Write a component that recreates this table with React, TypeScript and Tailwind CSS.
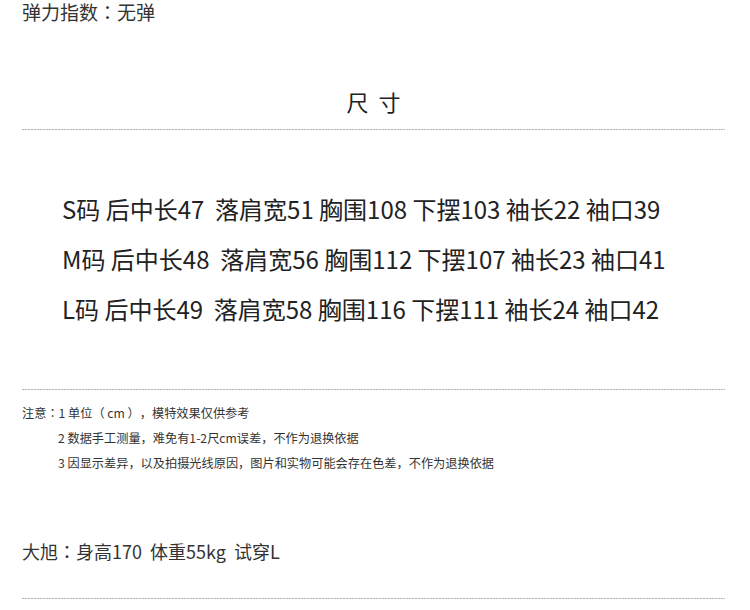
import React from "react";

const font = { fontFamily: '"Noto Sans CJK SC", "Noto Sans", sans-serif' };

function Dots() {
  return (
    <div className="h-px w-full bg-[repeating-linear-gradient(to_right,#b4b4b4_0px,#b4b4b4_2px,#e6e6e6_2px,#e6e6e6_3px)]" />
  );
}

function Colon() {
  return <span style={{ fontFamily: '"Noto Sans CJK TC", sans-serif' }}>：</span>;
}

const rows = [
  "S码 后中长47\u00a0\u00a0落肩宽51 胸围108 下摆103 袖长22 袖口39",
  "M码 后中长48\u00a0\u00a0落肩宽56 胸围112 下摆107 袖长23 袖口41",
  "L码 后中长49\u00a0\u00a0落肩宽58 胸围116 下摆111 袖长24 袖口42",
];

export default function App() {
  return (
    <div
      className="w-[750px] h-[610px] bg-white overflow-hidden pl-[22px] pr-[25px] text-[#333] [text-spacing-trim:space-all]"
      style={font}
    >
      <div className="flex flex-col">
        <div className="h-[23px] leading-[23px] text-[19px] whitespace-nowrap">
          弹力指数<Colon />无弹
        </div>

        <div className="mt-[63px] h-[30px] leading-[30px] text-[22px] text-[#222] flex justify-center gap-[10px]">
          <span>尺</span>
          <span>寸</span>
        </div>

        <div className="mt-[13px]">
          <Dots />
        </div>

        <div className="mt-[54px] pl-[40px] flex flex-col text-[24px] text-[#222]">
          {rows.map((r) => (
            <div key={r} className="h-[50px] leading-[50px] whitespace-nowrap">
              {r}
            </div>
          ))}
        </div>

        <div className="mt-[55px]">
          <Dots />
        </div>

        <div className="mt-[11px] flex flex-col text-[12.2px] text-[#333]">
          <div className="h-[25px] leading-[25px] whitespace-nowrap">
            注意<Colon />1 单位（ cm ），模特效果仅供参考
          </div>
          <div className="h-[25px] leading-[25px] whitespace-nowrap pl-[36px]">2 数据手工测量，难免有1-2尺cm误差，不作为退换依据</div>
          <div className="h-[25px] leading-[25px] whitespace-nowrap pl-[36px]">3 因显示差异，以及拍摄光线原因，图片和实物可能会存在色差，不作为退换依据</div>
        </div>

        <div className="mt-[63px] h-[24px] leading-[24px] text-[18px] whitespace-nowrap">
          大旭<Colon />身高170&nbsp;&nbsp;体重55kg&nbsp;&nbsp;试穿L
        </div>

        <div className="mt-[35px]">
          <Dots />
        </div>
      </div>
    </div>
  );
}
